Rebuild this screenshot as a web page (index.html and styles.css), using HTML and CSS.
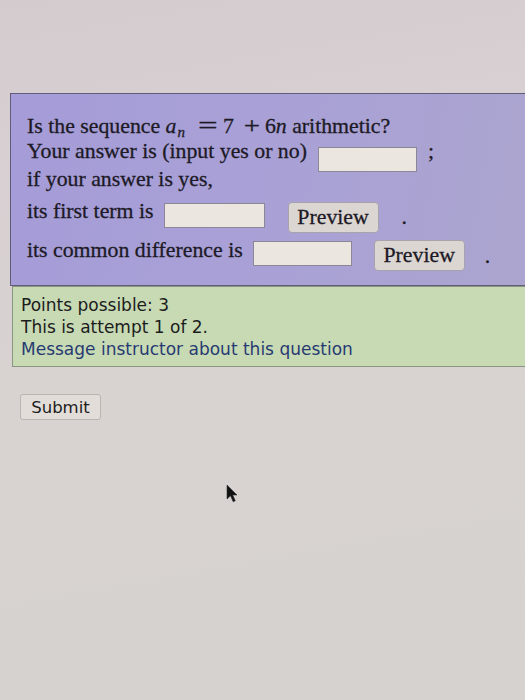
FILE: index.html
```html
<!DOCTYPE html>
<html>
<head>
<meta charset="utf-8">
<link rel="stylesheet" href="styles.css">
</head>
<body>
<div class="page">
  <div class="question">
    <div class="row r1"><span>Is the sequence&nbsp;<span class="math"><i>a</i><sub><i>n</i></sub><span class="op eq"><span class="g g-eq">=</span></span>7<span class="op plus"><span class="g g-plus">+</span></span>6<i>n</i></span>&nbsp;arithmetic?</span></div>
    <div class="row r2"><span>Your answer is (input yes or no)</span><input class="ans a-yes" type="text"><span class="semi">;</span></div>
    <div class="row r3"><span>if your answer is yes,</span></div>
    <div class="row r4"><span>its first term is</span><input class="ans a-first" type="text"><button class="preview p-first">Preview</button><span class="dot">.</span></div>
    <div class="row r5"><span>its common difference is</span><input class="ans a-diff" type="text"><button class="preview p-diff">Preview</button><span class="dot d2">.</span></div>
  </div>
  <div class="info">
    <div>Points possible: 3</div>
    <div>This is attempt 1 of 2.</div>
    <div><a href="#" class="msg">Message instructor about this question</a></div>
  </div>
  <div class="actions"><button class="submit">Submit</button></div>
</div>
<svg class="cursor" width="12" height="19" viewBox="0 0 12 19"><path d="M1 1 L1 15 L4.5 11.8 L7.2 17.8 L9.3 16.8 L6.7 11 L11 11 Z" fill="#111" stroke="#333" stroke-width="0.6"/></svg>
</body>
</html>
```
FILE: styles.css
```css
html, body {
  margin: 0;
  padding: 0;
}
body {
  width: 525px;
  height: 700px;
  overflow: hidden;
  position: relative;
  background: linear-gradient(170deg, #d4cbcf 0%, #d8d0d2 25%, #d8d3d0 60%, #d6d2cf 100%);
}
.page {
  padding-top: 93px;
}
.question {
  margin-left: 10px;
  border: 1px solid #615c78;
  border-right: none;
  background: linear-gradient(100deg, #a59cd8 0%, #a9a1d6 50%, #aba5cf 100%);
  padding: 17px 0 8px 16px;
  font-family: "Liberation Serif", "Times New Roman", serif;
  font-size: 21.8px;
  color: #1d1a26;
  -webkit-text-stroke: 0.3px #1d1a26;
}
.row {
  display: flex;
  align-items: flex-start;
  line-height: 28px;
  white-space: nowrap;
}
.r1 { height: 26px; }
.r2 { height: 28px; }
.r3 { height: 32px; }
.r4 { height: 39px; }
.r5 { height: 41px; }
.math i { font-style: italic; }
.math sub {
  font-size: 15px;
  vertical-align: -4px;
  line-height: 0;
  margin-left: 1px;
}
.op {
  display: inline-block;
  text-align: center;
  font-size: 24px;
}
.g { display: inline-block; }
.g-eq { transform: scaleX(1.45); }
.g-plus { transform: scaleX(1.2); }
.eq { width: 24px; margin: 0 3px 0 11px; }
.plus { width: 22px; margin: 0 2px 0 7px; }
.ans {
  box-sizing: border-box;
  height: 25px;
  width: 99px;
  border: 1px solid #8c8796;
  background: #ece6e0;
  padding: 0;
  margin: 0;
}
.a-yes { margin: 10px 0 0 11px; }
.semi { margin-left: 11px; }
.a-first { margin: 6px 0 0 10px; width: 101px; }
.a-diff { margin: 5px 0 0 10px; width: 99px; }
.preview {
  box-sizing: border-box;
  height: 31px;
  width: 91px;
  padding: 0;
  border: 1px solid #a8a2ac;
  border-radius: 4px;
  background: #dcd6d2;
  font-family: "Liberation Serif", "Times New Roman", serif;
  font-size: 21.8px;
  color: #1d1a26;
  -webkit-text-stroke: 0.3px #1d1a26;
  line-height: 29px;
}
.p-first { margin: 5px 0 0 23px; }
.p-diff { margin: 4px 0 0 22px; }
.dot { margin: 6px 0 0 23px; }
.d2 { margin-left: 20px; }
.info {
  margin-left: 12px;
  border: 1px solid #8c9584;
  border-right: none;
  background: #c7dab4;
  padding: 7px 0 6px 8px;
  font-family: "DejaVu Sans", Verdana, sans-serif;
  font-size: 17px;
  line-height: 22px;
  color: #1c1c1c;
}
.msg {
  color: #273a72;
  text-decoration: none;
}
.actions {
  padding: 27px 0 0 20px;
}
.submit {
  box-sizing: border-box;
  width: 81px;
  height: 26px;
  border: 1px solid #bbb5b2;
  border-radius: 3px;
  background: #e2ddd8;
  font-family: "DejaVu Sans", Verdana, sans-serif;
  font-size: 16.5px;
  color: #1c1c1c;
  padding: 0;
}
.cursor {
  position: absolute;
  left: 226px;
  top: 484px;
}
```
